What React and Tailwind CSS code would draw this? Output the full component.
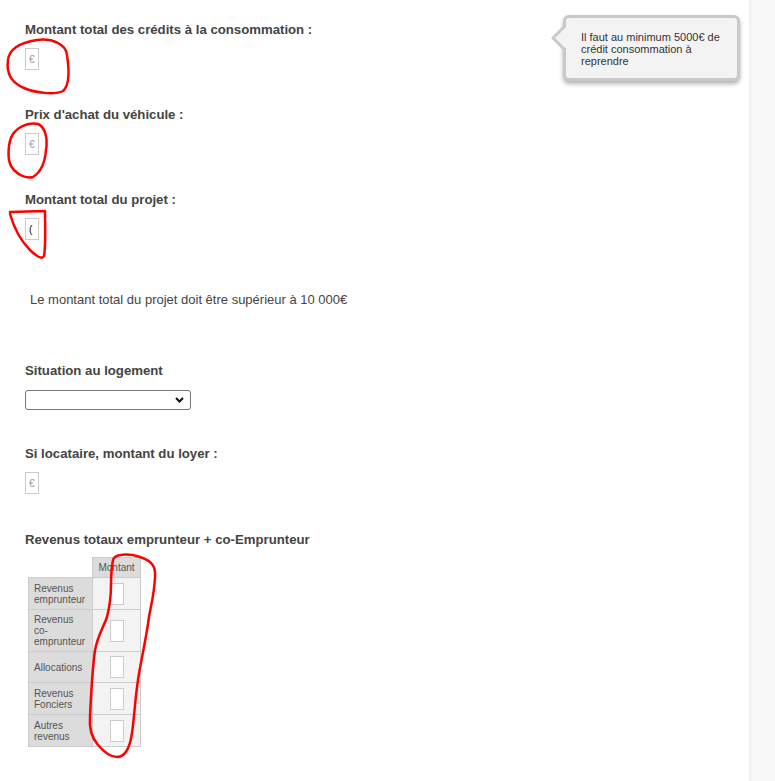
import React from 'react';

const Label = ({ children, className = '' }) => (
  <div className={`text-[13.2px] font-bold leading-4 text-[#444] ${className}`}>{children}</div>
);

const EuroInput = ({ value }) => (
  <input
    readOnly
    value={value}
    placeholder="€"
    className="block h-[22px] w-[14px] border border-[#ccc] bg-white px-[3px] text-[10px] text-black outline-none placeholder:text-[#999]"
  />
);

const rows = [
  { label: ['Revenus', 'emprunteur'], h: 'h-[32px]' },
  { label: ['Revenus', 'co-', 'emprunteur'], h: 'h-[42px]' },
  { label: ['Allocations'], h: 'h-[31px]' },
  { label: ['Revenus', 'Fonciers'], h: 'h-[32px]' },
  { label: ['Autres', 'revenus'], h: 'h-[32px]' },
];

const Tooltip = () => (
  <div className="absolute left-[563px] top-[15px] h-[66px] w-[177px] rounded-[6px] border-[3px] border-[#c9c9c9] bg-[#f3f3f3] pl-[15px] pt-[13px] text-[11px] leading-[12px] text-[#333] shadow-[0_3px_4px_rgba(0,0,0,0.3)]">
    Il faut au minimum 5000€ de
    <br />
    crédit consommation à
    <br />
    reprendre
    <svg className="absolute left-[-17px] top-[8px]" width="18" height="24" viewBox="0 0 18 24">
      <polygon points="4,12 15,2 18,2 18,22 15,22" fill="#f3f3f3" />
      <polyline points="15.5,0.5 4,12 15.5,23.5" fill="none" stroke="#c9c9c9" strokeWidth="3" strokeLinejoin="round" />
    </svg>
  </div>
);

const Scribbles = () => (
  <svg className="pointer-events-none absolute left-0 top-0" width="775" height="781" viewBox="0 0 775 781">
    <g fill="none" stroke="#f00" strokeWidth="2.5" strokeLinecap="round" strokeLinejoin="round">
      <path d="M37,40 C52,38 66,44 67,55 C69,68 70,85 63,91 C55,95 35,93 24,88 C12,83 6,74 8,60 C9,50 18,43 37,40" />
      <path d="M38,124 C45,127 48,138 46,150 C45,162 41,172 33,177 C25,179 16,174 11,166 C7,158 8,142 13,134 C18,127 28,122 38,124" />
      <path d="M10,212 L45,211 C45,225 46,245 44,256 C42,260 36,256 30,250 C20,240 14,228 10,214" />
      <path d="M113,560 C114,554 128,553 140,557 C152,561 156,566 155,578 C154,595 151,605 149,617 C146,640 141,660 138,680 C135,700 134,720 132,733 C130,747 125,757 117,757 C110,757 104,752 98,745 C92,738 89,728 90,717 C91,695 92,672 95,650 C98,635 104,626 107,617 C110,605 111,595 111,585 C111,575 112,565 113,560" />
    </g>
  </svg>
);

export default function App() {
  return (
    <div className="relative flex h-[781px] overflow-hidden bg-white font-['Liberation_Sans',Arial,sans-serif]">
      <main className="flex-1 px-[25px] pt-[22px]">
        <Label className="mb-[10px]">Montant total des crédits à la consommation :</Label>
        <EuroInput />

        <Label className="mb-[10px] mt-[37px]">Prix d'achat du véhicule :</Label>
        <EuroInput />

        <Label className="mb-[10px] mt-[37px]">Montant total du projet :</Label>
        <EuroInput value="(" />

        <p className="ml-[5px] mt-[52px] text-[13px] leading-4 text-[#444]">
          Le montant total du projet doit être supérieur à 10 000€
        </p>

        <Label className="mb-[11px] mt-[55px]">Situation au logement</Label>
        <div className="relative w-[166px]">
          <select className="block h-[20px] w-[166px] appearance-none rounded-[3px] border border-[#767676] bg-white outline-none" />
          <svg className="absolute right-[7px] top-[7px]" width="9" height="6" viewBox="0 0 9 6">
            <polyline points="1,1 4.5,4.5 8,1" fill="none" stroke="#111" strokeWidth="2" />
          </svg>
        </div>

        <Label className="mb-[10px] mt-[36px]">Si locataire, montant du loyer :</Label>
        <EuroInput />

        <Label className="mb-[9px] mt-[38px]">Revenus totaux emprunteur + co-Emprunteur</Label>
        <table className="ml-[3px] border-collapse text-[10px] text-[#555]">
          <thead>
            <tr>
              <td className="w-[64px] p-0" />
              <th className="h-[20px] w-[48px] border border-[#ccc] bg-[#dcdcdc] p-0 align-middle font-normal">Montant</th>
            </tr>
          </thead>
          <tbody>
            {rows.map((r) => (
              <tr key={r.label.join(' ')}>
                <td className={`${r.h} w-[64px] border border-[#ccc] bg-[#dcdcdc] px-[5px] py-0 leading-[11px]`}>
                  {r.label.map((l, i) => (
                    <div key={i}>{l}</div>
                  ))}
                </td>
                <td className="border border-[#ccc] bg-[#f3f3f3] p-0 align-middle">
                  <input readOnly className="mx-auto block h-[22px] w-[14px] border border-[#ccc] bg-white outline-none" />
                </td>
              </tr>
            ))}
          </tbody>
        </table>
      </main>
      <aside className="w-[26px] bg-[#f8f8f8] shadow-[inset_3px_0_3px_-2px_rgba(0,0,0,0.06)]" />
      <Tooltip />
      <Scribbles />
    </div>
  );
}
